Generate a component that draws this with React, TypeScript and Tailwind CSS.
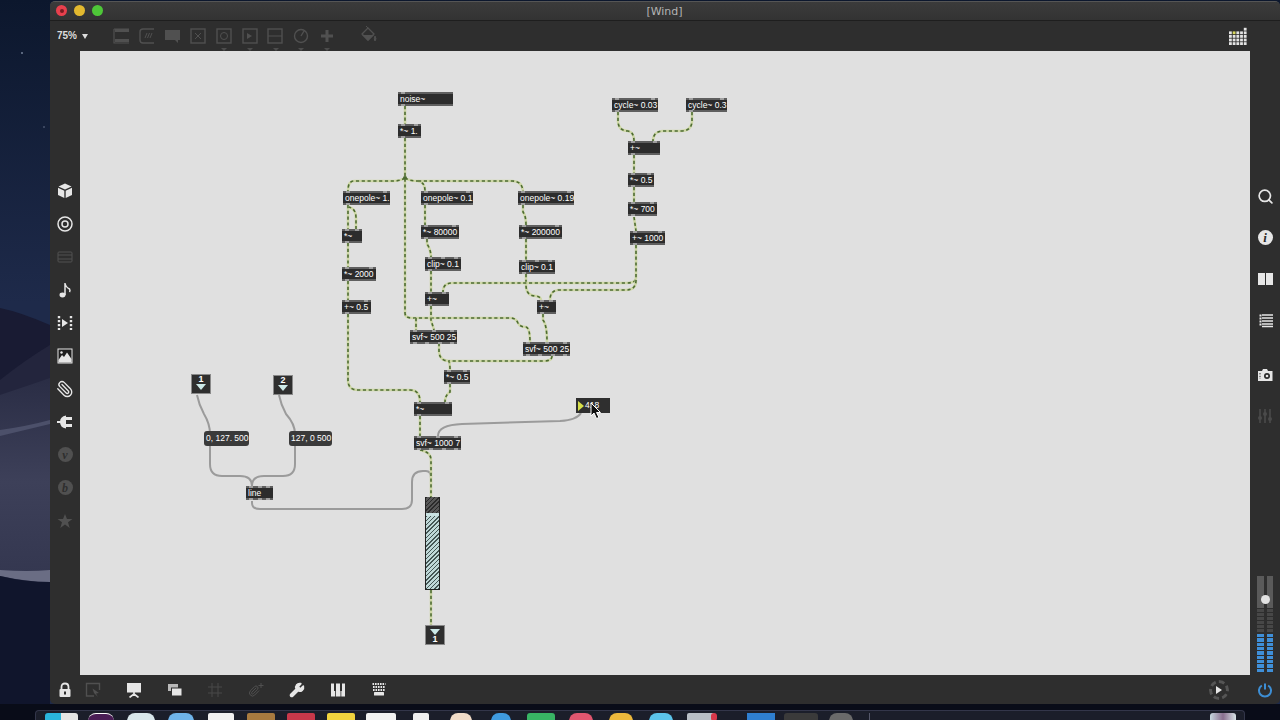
import { ReactNode } from "react";
import { Paperclip, Search, Wrench } from "lucide-react";

// patcher objects, in screen coordinates (canvas origin is subtracted below)
const CANVAS_X = 80;
const CANVAS_Y = 51;

interface Obj {
  t: string;
  x: number;
  y: number;
  w: number;
  ins?: number;
  outs?: number;
}

const objects: Obj[] = [
  { t: "noise~", x: 398, y: 92, w: 55, ins: 1, outs: 1 },
  { t: "*~ 1.", x: 398, y: 124, w: 23, ins: 2, outs: 1 },
  { t: "cycle~ 0.03", x: 612, y: 98, w: 46, ins: 2, outs: 1 },
  { t: "cycle~ 0.3", x: 686, y: 98, w: 41, ins: 2, outs: 1 },
  { t: "+~", x: 628, y: 141, w: 32, ins: 2, outs: 1 },
  { t: "*~ 0.5", x: 628, y: 173, w: 26, ins: 2, outs: 1 },
  { t: "*~ 700", x: 628, y: 202, w: 29, ins: 2, outs: 1 },
  { t: "+~ 1000", x: 630, y: 231, w: 35, ins: 2, outs: 1 },
  { t: "onepole~ 1.", x: 343, y: 191, w: 47, ins: 2, outs: 1 },
  { t: "onepole~ 0.1", x: 421, y: 191, w: 52, ins: 2, outs: 1 },
  { t: "onepole~ 0.19", x: 518, y: 191, w: 56, ins: 2, outs: 1 },
  { t: "*~", x: 342, y: 229, w: 20, ins: 2, outs: 1 },
  { t: "*~ 80000", x: 421, y: 225, w: 38, ins: 2, outs: 1 },
  { t: "*~ 200000", x: 519, y: 225, w: 43, ins: 2, outs: 1 },
  { t: "*~ 2000", x: 342, y: 267, w: 34, ins: 2, outs: 1 },
  { t: "+~ 0.5", x: 342, y: 300, w: 29, ins: 2, outs: 1 },
  { t: "clip~ 0.1", x: 425, y: 257, w: 36, ins: 3, outs: 1 },
  { t: "clip~ 0.1", x: 519, y: 260, w: 36, ins: 3, outs: 1 },
  { t: "+~", x: 425, y: 292, w: 24, ins: 2, outs: 1 },
  { t: "+~", x: 537, y: 300, w: 19, ins: 2, outs: 1 },
  { t: "svf~ 500 25", x: 410, y: 330, w: 47, ins: 3, outs: 4 },
  { t: "svf~ 500 25", x: 523, y: 342, w: 47, ins: 3, outs: 4 },
  { t: "*~ 0.5", x: 444, y: 370, w: 26, ins: 2, outs: 1 },
  { t: "*~", x: 414, y: 402, w: 38, ins: 2, outs: 1 },
  { t: "svf~ 1000 7", x: 414, y: 436, w: 47, ins: 3, outs: 4 },
  { t: "line", x: 246, y: 486, w: 27, ins: 3, outs: 3 },
];

const signalCords = [
  "M405 106V124",
  "M405 138V313Q405 318 412 318H510Q516 318 518 323Q520 327 526 327Q530 328 530 342",
  "M405 178Q400 181 394 181H354Q348 181 348 191",
  "M405 178Q410 181 418 181Q425 182 425 191",
  "M418 181H512Q522 181 523 191",
  "M348 205V229",
  "M348 207Q356 208 356 218V229",
  "M348 243V267",
  "M348 281V300",
  "M348 314V380Q348 390 358 390H410Q420 390 420 402",
  "M425 205V225",
  "M427 239V244Q431 250 431 257",
  "M431 271V292",
  "M431 306V320L434 330",
  "M416 318V330",
  "M523 205V212Q526 216 526 225",
  "M526 239V260",
  "M526 274V285Q526 296 536 296Q541 297 541 300",
  "M543 314V320Q547 325 547 342",
  "M636 245V278Q636 283 626 283H452Q443 283 443 292",
  "M636 280Q636 290 626 290H558Q550 291 550 300",
  "M439 343V352Q440 361 449 361Q450 364 450 370",
  "M552 356Q552 361 544 361H449",
  "M450 384V392Q445 395 445 402",
  "M420 416V436",
  "M420 450Q431 452 431 460V497",
  "M431 590V625",
  "M618 112V122Q619 131 628 131Q634 132 634 141",
  "M692 112V122Q691 131 681 131H662Q653 132 653 141",
  "M634 155V173",
  "M634 187V202",
  "M634 217L636 231",
];

const controlCords = [
  "M197 395Q199 405 204 414Q210 424 210 434V464Q210 476 222 476H240Q252 476 252 486",
  "M279 395Q281 405 286 414Q295 424 295 434V464Q295 476 283 476H264Q252 476 252 486",
  "M252 501V503Q252 509 260 509H402Q412 509 412 500V482Q412 471 423 471H426Q431 471 431 478",
  "M581 413Q577 420 560 421L462 424Q438 425 438 436",
];

function Cords() {
  return (
    <svg className="absolute inset-0 pointer-events-none" width="1170" height="624" viewBox="80 51 1170 624" fill="none">
      {controlCords.map((d, i) => (
        <path key={i} d={d} stroke="#9b9b9b" strokeWidth="2" />
      ))}
      {signalCords.map((d, i) => (
        <g key={i}>
          <path d={d} stroke="#cfd8a8" strokeWidth="2.6" />
          <path d={d} stroke="#4d6b33" strokeWidth="1.6" strokeDasharray="3.2 2.6" />
        </g>
      ))}
      <circle cx="405" cy="178" r="2" fill="#4d6b33" />
    </svg>
  );
}

function Nubs({ n }: { n: number }) {
  return (
    <div className="h-[2px] bg-[#5f5f5f] flex justify-between px-[3px]">
      {Array.from({ length: n }).map((_, i) => (
        <span key={i} className="w-[4px] h-[2px] bg-[#9f9f9f]" />
      ))}
    </div>
  );
}

function PatchObject({ o }: { o: Obj }) {
  return (
    <div
      className="absolute h-[14px] flex flex-col bg-[#2c2c2c]"
      style={{ left: o.x - CANVAS_X, top: o.y - CANVAS_Y, width: o.w }}
    >
      <Nubs n={o.ins ?? 1} />
      <div className="flex-1 flex items-center pl-[2px] text-[8.5px] leading-none text-white whitespace-nowrap">
        {o.t}
      </div>
      <Nubs n={o.outs ?? 1} />
    </div>
  );
}

function Message({ t, x, w }: { t: string; x: number; w: number }) {
  return (
    <div
      className="absolute top-[380px] h-[15px] rounded-[3px] bg-[#3a3a3a] flex items-center pl-[2px] text-[8.5px] leading-none text-white whitespace-nowrap"
      style={{ left: x - CANVAS_X, width: w }}
    >
      {t}
    </div>
  );
}

function Port({ n, x, y, outlet }: { n: string; x: number; y: number; outlet?: boolean }) {
  return (
    <div
      className={`absolute w-[20px] h-[20px] bg-[#2f2f2f] border border-[#8a8a8a] flex items-center text-[9px] leading-none font-bold text-white ${outlet ? "flex-col-reverse" : "flex-col"}`}
      style={{ left: x - CANVAS_X, top: y - CANVAS_Y }}
    >
      <span className="h-[9px] flex items-center">{n}</span>
      <span className={`w-0 h-0 border-x-[5px] border-x-transparent ${outlet ? "border-t-[6px] border-t-[#cdeae8] mt-[2px]" : "border-t-[6px] border-t-[#cdeae8]"}`} />
    </div>
  );
}

function GainSlider() {
  return (
    <div className="absolute left-[345px] top-[446px] w-[15px] h-[93px] flex flex-col border-x border-b border-[#222]">
      <div className="h-[16px] bg-[repeating-linear-gradient(135deg,#2b2b2b_0,#2b2b2b_1px,#585858_1px,#585858_3px)]" />
      <div className="h-[3px] bg-[#c9e2e2]" />
      <div className="flex-1 bg-[repeating-linear-gradient(135deg,#445554_0,#445554_1px,#bfd8d8_1px,#bfd8d8_3px)]" />
    </div>
  );
}

function NumberBox() {
  return (
    <div className="absolute left-[496px] top-[347px] w-[34px] h-[15px] bg-[#2f2f2f] flex items-center pl-[2px] gap-[1px] text-[8.5px] leading-none text-white">
      <span className="w-0 h-0 border-y-[5px] border-y-transparent border-l-[6px] border-l-[#d6df4a]" />
      418
    </div>
  );
}

function Cursor() {
  return (
    <svg className="absolute left-[509px] top-[351px] pointer-events-none" width="13" height="18" viewBox="0 0 13 18">
      <path d="M2 1V14L5 11L7.5 16.5L10 15.5L7.5 10.5H11.5Z" fill="#111" stroke="#fff" strokeWidth="1" />
    </svg>
  );
}

function Ico({ children, w = 20, h = 20, className = "" }: { children: ReactNode; w?: number; h?: number; className?: string }) {
  return (
    <svg width={w} height={h} viewBox={`0 0 ${w} ${h}`} fill="none" className={className}>
      {children}
    </svg>
  );
}

const DIM = "#505050";
const LT = "#e6e6e6";

const toolIcons: ReactNode[] = [
  <Ico key="a">
    <path d="M3 3H18M3 3V17H18M3 3H4" stroke={DIM} strokeWidth="1.2" />
    <rect x="4" y="3" width="14" height="3" fill={DIM} />
    <rect x="4" y="13" width="14" height="3" fill={DIM} />
  </Ico>,
  <Ico key="b">
    <path d="M17 3H6Q3 3 3 6V14Q3 17 6 17H17" stroke={DIM} strokeWidth="1.4" />
    <path d="M8 12L10 7M10.5 12L12.5 7M13 12L15 7" stroke={DIM} />
  </Ico>,
  <Ico key="c">
    <path d="M3 4H18V14H16V17L13 14H3Z" fill={DIM} />
  </Ico>,
  <Ico key="d">
    <rect x="3" y="3" width="14" height="14" stroke={DIM} strokeWidth="1.4" />
    <path d="M7 7L13 13M13 7L7 13" stroke={DIM} />
  </Ico>,
  <Ico key="e">
    <rect x="3" y="3" width="14" height="14" stroke={DIM} strokeWidth="1.4" />
    <circle cx="10" cy="10" r="3.5" stroke={DIM} />
  </Ico>,
  <Ico key="f">
    <rect x="3" y="3" width="14" height="14" stroke={DIM} strokeWidth="1.4" />
    <path d="M7 7V13L12 10Z" fill={DIM} />
  </Ico>,
  <Ico key="g">
    <rect x="3" y="3" width="14" height="14" stroke={DIM} strokeWidth="1.4" />
    <path d="M3 10H17" stroke={DIM} />
  </Ico>,
  <Ico key="h">
    <circle cx="10" cy="10" r="6.5" stroke={DIM} strokeWidth="1.4" />
    <path d="M10 10L13 5" stroke={DIM} strokeWidth="1.4" />
  </Ico>,
  <Ico key="i">
    <path d="M10 4V16M4 10H16" stroke={DIM} strokeWidth="3" />
  </Ico>,
];

const sideIcons: ReactNode[] = [
  <Ico key="box">
    <path d="M10 2.5L16.5 5.5L10 8.5L3.5 5.5Z" fill={LT} />
    <path d="M3 6.8L9.3 9.8V17L3 14Z" fill={LT} />
    <path d="M17 6.8L10.7 9.8V17L17 14Z" fill={LT} />
  </Ico>,
  <Ico key="tgt">
    <circle cx="10" cy="10" r="7" stroke={LT} strokeWidth="1.5" />
    <circle cx="10" cy="10" r="3" stroke={LT} strokeWidth="1.5" />
  </Ico>,
  <Ico key="bars">
    <rect x="3" y="5" width="14" height="10" rx="1" stroke={DIM} />
    <path d="M3 8H17M3 12H17" stroke={DIM} />
  </Ico>,
  <Ico key="note">
    <ellipse cx="7.5" cy="15" rx="3" ry="2.4" fill={LT} />
    <path d="M10 15V3Q10.5 7 14.5 9Q15.5 10.5 14.5 12" stroke={LT} strokeWidth="1.5" />
  </Ico>,
  <Ico key="film">
    <path d="M4 3V17M16 3V17" stroke={LT} strokeWidth="2.4" strokeDasharray="2.2 1.8" />
    <path d="M7 6V14L13 10Z" fill={LT} />
  </Ico>,
  <Ico key="img">
    <rect x="3" y="3" width="14" height="14" fill="#1f1f1f" stroke={LT} />
    <circle cx="6.5" cy="6.5" r="1.2" fill={LT} />
    <path d="M3.5 14L7 9L9 11L12 6.5L16.5 13V16.5H3.5Z" fill={LT} />
  </Ico>,
  <Paperclip key="clip" size={18} color={LT} strokeWidth={1.8} className="-scale-x-100" />,
  <Ico key="plug">
    <path d="M2 10H6" stroke={LT} strokeWidth="2" />
    <path d="M11 3.5V16.5Q5 15.5 5 10Q5 4.5 11 3.5Z" fill={LT} />
    <path d="M11 6.5H17M11 13.5H17" stroke={LT} strokeWidth="3" />
  </Ico>,
  <span key="v" className="w-[15px] h-[15px] rounded-full bg-[#505050] flex items-center justify-center font-['Liberation_Serif',serif] italic font-bold text-[12px] leading-none text-[#2e2e2e]">v</span>,
  <span key="b" className="w-[15px] h-[15px] rounded-full bg-[#505050] flex items-center justify-center font-['Liberation_Serif',serif] italic font-bold text-[12px] leading-none text-[#2e2e2e]">b</span>,
  <Ico key="star">
    <path d="M10 3L12 8H17.5L13 11.3L14.7 17L10 13.6L5.3 17L7 11.3L2.5 8H8Z" fill={DIM} />
  </Ico>,
];

function RightBar() {
  return (
    <aside className="w-[30px] flex flex-col items-center pt-[125px]">
      <div className="h-[41px] flex items-center">
        <Search size={17} color={LT} strokeWidth={2.4} />
      </div>
      <div className="h-[41px] flex items-center">
        <span className="w-[15px] h-[15px] rounded-full bg-[#e6e6e6] flex items-center justify-center font-['Liberation_Serif',serif] italic font-bold text-[13px] leading-none text-[#2a2a2a]">i</span>
      </div>
      <div className="h-[41px] flex items-center gap-[1px]">
        <span className="w-[7px] h-[12px] bg-[#e6e6e6]" />
        <span className="w-[7px] h-[12px] bg-[#e6e6e6]" />
      </div>
      <div className="h-[41px] flex items-center">
        <Ico w={16} h={16}>
          <path d="M3.5 2.5V14" stroke={LT} strokeWidth="2" strokeDasharray="2 1" />
          <path d="M5 3H16M5 6H16M5 9H16M5 12H16M5 14.5H16" stroke={LT} strokeWidth="1.6" />
        </Ico>
      </div>
      <div className="h-[55px] pt-[15px] flex items-center">
        <Ico w={16} h={16}>
          <path d="M1 4H5L6 2H10L11 4H15.5V14H1Z" fill={LT} />
          <circle cx="10" cy="9" r="3" fill="#2a2a2a" />
          <circle cx="10" cy="9" r="1.3" fill={LT} />
          <path d="M3 6V12" stroke="#2a2a2a" strokeWidth="1" strokeDasharray="1.4 1.4" />
        </Ico>
      </div>
      <div className="h-[41px] flex items-center">
        <Ico w={16} h={16}>
          <path d="M3 1V15M8 1V15M13 1V15" stroke="#4a4a4a" strokeWidth="1.6" />
          <circle cx="3" cy="10" r="2" fill="#4a4a4a" />
          <circle cx="8" cy="6" r="2" fill="#4a4a4a" />
          <circle cx="13" cy="11" r="2" fill="#4a4a4a" />
        </Ico>
      </div>
      <div className="flex-1" />
      <Meter />
    </aside>
  );
}

function MeterColumn() {
  return (
    <div className="w-[6.5px] h-[96px] flex flex-col">
      <div className="h-[32px] bg-[#5a5a5a]" />
      <div className="h-[25px] flex flex-col gap-[1px] pt-[1px]">
        {[0, 1, 2, 3, 4, 5].map((i) => (
          <span key={i} className="h-[3px] bg-[#474747]" />
        ))}
      </div>
      <div className="flex-1 flex flex-col gap-[1px] pt-[1px]">
        {[0, 1, 2, 3, 4, 5, 6, 7, 8].map((i) => (
          <span key={i} className="flex-1 bg-[#3f8fd8]" />
        ))}
      </div>
    </div>
  );
}

function Meter() {
  return (
    <div className="relative flex gap-[3px] mb-[3px]">
      <MeterColumn />
      <MeterColumn />
      <span className="absolute left-[3.5px] top-[19px] w-[9px] h-[9px] rounded-full bg-[#e2e2e2]" />
    </div>
  );
}

function BottomBar() {
  return (
    <footer className="h-[29px] flex items-center pl-[6px] pr-[6px]">
      <div className="w-[18px] flex justify-center">
        <Ico w={14} h={16}>
          <path d="M3.5 7V5Q3.5 1.5 7 1.5Q10.5 1.5 10.5 5V7" stroke={LT} strokeWidth="1.8" />
          <rect x="1.5" y="7" width="11" height="8" rx="1" fill={LT} />
          <rect x="6" y="9.5" width="2" height="3" fill="#2e2e2e" />
        </Ico>
      </div>
      <div className="w-[38px] flex justify-center">
        <Ico w={16} h={16}>
          <path d="M9 14H1.5V1.5H14.5V8" stroke={DIM} strokeWidth="1.4" />
          <path d="M7.5 6.5L14 11L11 11.5L13 15L9 11L7.5 6.5Z" fill={DIM} />
        </Ico>
      </div>
      <div className="w-[43px] flex justify-center">
        <Ico w={16} h={16}>
          <rect x="1" y="1" width="14" height="9.5" fill={LT} />
          <path d="M8 10V12M8 12L3.5 15.5M8 12L12.5 15.5" stroke={LT} strokeWidth="1.6" />
        </Ico>
      </div>
      <div className="w-[39px] flex justify-center">
        <Ico w={16} h={14}>
          <rect x="1" y="1" width="10" height="7" fill="#b9b9b9" />
          <rect x="4.5" y="5" width="10.5" height="8" fill={LT} stroke="#2e2e2e" />
        </Ico>
      </div>
      <div className="w-[41px] flex justify-center">
        <Ico w={16} h={16}>
          <path d="M5 1V15M11 1V15M1 5H15M1 11H15" stroke="#484848" />
        </Ico>
      </div>
      <div className="w-[41px] flex justify-center">
        <Ico w={16} h={16}>
          <Paperclip x={0} y={3} width={12} height={12} color={DIM} strokeWidth={2} />
          <path d="M13 1V6M10.5 3.5H15.5" stroke={DIM} />
        </Ico>
      </div>
      <div className="w-[41px] flex justify-center">
        <Wrench size={16} color={LT} fill={LT} />
      </div>
      <div className="w-[41px] flex justify-center">
        <Ico w={16} h={16}>
          <path d="M1 1.5H4V9H5V14.5H1ZM6 1.5H10V9H10.5V14.5H5.8V9H6ZM12 1.5H15V14.5H11.3V9H12Z" fill={LT} />
        </Ico>
      </div>
      <div className="w-[41px] flex justify-center">
        <Ico w={16} h={15}>
          <path d="M1.5 2H14.5M2 5H14M2 8H14" stroke={LT} strokeWidth="1.8" strokeDasharray="1.6 0.9" />
          <rect x="3" y="10" width="10" height="3.5" rx="0.5" fill={LT} />
        </Ico>
      </div>
      <div className="flex-1" />
      <div className="mr-[27px] w-[20px] h-[20px] rounded-full border-[3px] border-dashed border-[#555] flex items-center justify-center">
        <span className="w-0 h-0 border-y-[4px] border-y-transparent border-l-[6px] border-l-[#e6e6e6]" />
      </div>
      <div className="w-[18px] flex justify-center">
        <Ico w={16} h={16}>
          <path d="M8 1.5V7.5" stroke="#3d8ed4" strokeWidth="2" />
          <path d="M4.8 3.5A6 6 0 1 0 11.2 3.5" stroke="#3d8ed4" strokeWidth="2" />
        </Ico>
      </div>
    </footer>
  );
}

function GridIcon() {
  const cols = [0, 3.7, 7.4, 11.1, 14.8];
  const rows = [4.4, 8, 11.6, 15.2];
  return (
    <svg width="18" height="18" viewBox="0 0 18 18">
      <rect x="14.8" y="0.8" width="2.8" height="2.8" fill="#e4e4e4" />
      {rows.map((y) =>
        cols.map((x) => (
          <rect key={`${x}-${y}`} x={x} y={y} width="2.8" height="2.8" fill={x === 3.7 && y === 4.4 ? "#d8d860" : "#e4e4e4"} />
        ))
      )}
    </svg>
  );
}

function Wallpaper() {
  return (
    <svg className="absolute inset-0" width="1280" height="720" viewBox="0 0 1280 720">
      <defs>
        <linearGradient id="sky" x1="0" y1="0" x2="0" y2="1">
          <stop offset="0" stopColor="#0c172d" />
          <stop offset="0.42" stopColor="#1e2a4a" />
        </linearGradient>
        <linearGradient id="dune" x1="0" y1="0" x2="0" y2="1">
          <stop offset="0" stopColor="#2a2d45" />
          <stop offset="0.5" stopColor="#3d4059" />
          <stop offset="1" stopColor="#33364f" />
        </linearGradient>
      </defs>
      <rect width="1280" height="720" fill="url(#sky)" />
      <circle cx="22" cy="53" r="0.8" fill="#b9c6dc" />
      <circle cx="44" cy="127" r="0.7" fill="#7f8ba5" />
      <path d="M0 308Q20 312 50 325V420H0Z" fill="#191b33" />
      <path d="M0 380Q25 360 50 345V420H0Z" fill="#23253d" />
      <path d="M0 395Q30 385 50 378V585H0Z" fill="url(#dune)" />
      <path d="M0 430Q28 426 50 420V424Q25 430 0 436Z" fill="#4c506a" />
      <path d="M0 570Q28 572 50 570V582Q28 582 0 576Z" fill="#6a6d84" />
      <path d="M0 576Q25 582 50 582V720H0Z" fill="#10152c" />
      <rect y="704" width="1280" height="16" fill="#090c18" />
    </svg>
  );
}

const dockIcons = [
  { w: "w-[33px]", c: "bg-[linear-gradient(90deg,#2ab5dc_50%,#e4e4e4_50%)]", r: "rounded-t-[3px]" },
  { w: "w-[26px]", c: "bg-[#4a1d55] border-t border-white", r: "rounded-t-full" },
  { w: "w-[28px]", c: "bg-[#d8e6ea]", r: "rounded-t-full" },
  { w: "w-[26px]", c: "bg-[#6fb4ea]", r: "rounded-t-full" },
  { w: "w-[26px]", c: "bg-[#f0f0f0]", r: "rounded-t-[2px]" },
  { w: "w-[28px]", c: "bg-[#a87a3f]", r: "rounded-t-[2px]" },
  { w: "w-[28px]", c: "bg-[#c8384a]", r: "rounded-t-[2px]" },
  { w: "w-[28px]", c: "bg-[#f0d23e]", r: "rounded-t-[2px]" },
  { w: "w-[30px]", c: "bg-[#f2f2f2]", r: "rounded-t-[2px]" },
  { w: "w-[16px]", c: "bg-[#eeeeee]", r: "rounded-t-[2px]" },
  { w: "w-[22px]", c: "bg-[#f1dcc8]", r: "rounded-t-full" },
  { w: "w-[20px]", c: "bg-[#3f9be0]", r: "rounded-t-full" },
  { w: "w-[28px]", c: "bg-[#38b464]", r: "rounded-t-[3px]" },
  { w: "w-[24px]", c: "bg-[#e0566f]", r: "rounded-t-full" },
  { w: "w-[24px]", c: "bg-[#ecb83c]", r: "rounded-t-full" },
  { w: "w-[24px]", c: "bg-[#5cc4ea]", r: "rounded-t-full" },
  { w: "w-[28px]", c: "bg-[#b9bfc6]", r: "rounded-t-[2px]" },
];

function Dock() {
  return (
    <div className="absolute left-[35px] right-[35px] top-[710px] h-[10px] bg-[#1b1e2a] border-t border-x border-[#33364a] rounded-t-[4px] flex pl-[5px] pt-[2px]">
      {dockIcons.map((d, i) => (
        <div key={i} className="w-[40px] flex justify-center">
          <span className={`h-[8px] ${d.w} ${d.c} ${d.r}`} />
        </div>
      ))}
      <span className="w-[6px] h-[8px] -ml-[10px] rounded-full bg-[#d8384a]" />
      <div className="w-[40px] ml-[24px] flex justify-center">
        <span className="w-[28px] h-[8px] bg-[#2f7fd0]" />
      </div>
      <div className="w-[40px] flex justify-center">
        <span className="w-[34px] h-[8px] rounded-t-[3px] bg-[#3a3a3a]" />
      </div>
      <div className="w-[40px] flex justify-center">
        <span className="w-[24px] h-[8px] rounded-t-full bg-[#6a6a6a]" />
      </div>
      <span className="w-px h-[8px] ml-[8px] mr-[340px] bg-[#55586a]" />
      <span className="w-[26px] h-[8px] rounded-t-[3px] bg-[linear-gradient(90deg,#c8d8e0,#8a6f90,#d8e4e8)]" />
    </div>
  );
}

export default function App() {
  return (
    <div className="relative w-[1280px] h-[720px] overflow-hidden bg-[#0c172d] font-['Liberation_Sans',Arial,sans-serif]">
      <Wallpaper />
      <Dock />

      {/* patcher window */}
      <div className="absolute left-[50px] top-[1px] w-[1230px] h-[703px] flex flex-col bg-[#2e2e2e] rounded-[5px] border-t border-[#555] overflow-hidden">
        <header className="relative h-[19px] shrink-0 bg-[linear-gradient(#3b3b3b,#333333)] border-b border-[#1e1e1e] flex items-center justify-center">
          <div className="absolute left-[6px] top-[3px] flex gap-[7px]">
            <span className="w-[11px] h-[11px] rounded-full bg-[#e8404d] flex items-center justify-center">
              <span className="w-[4px] h-[4px] rounded-full bg-[#7a1a20]" />
            </span>
            <span className="w-[11px] h-[11px] rounded-full bg-[#e3b92f]" />
            <span className="w-[11px] h-[11px] rounded-full bg-[#4ec738]" />
          </div>
          <span className="ml-[-1px] text-[11px] leading-none text-[#b4b4b4] font-['DejaVu_Sans',sans-serif]">[Wind]</span>
        </header>

        <div className="h-[30px] shrink-0 flex items-center pl-[7px] pr-[33px]">
          <span className="text-[10px] font-bold text-[#dcdcdc] leading-none">75%</span>
          <span className="ml-[5px] w-0 h-0 border-x-[3px] border-x-transparent border-t-[5px] border-t-[#dcdcdc]" />
          <div className="ml-[20px] flex">
            {toolIcons.map((ic, i) => (
              <div key={i} className="relative w-[25.75px] flex justify-center">
                {ic}
                {i >= 4 && (
                  <span className="absolute left-[10px] -bottom-[5px] w-0 h-0 border-x-[3px] border-x-transparent border-t-[3px] border-t-[#4c4c4c]" />
                )}
              </div>
            ))}
          </div>
          <div className="ml-[15px] w-[26px] flex justify-center">
            <Ico>
              <path d="M10 2L16 8L10 14L4 8Z" stroke={DIM} strokeWidth="1.3" />
              <path d="M4 9H16L10 15Z" fill={DIM} />
              <path d="M10 2L8 0M17 10Q19 13 17 15Q15.5 13 17 10Z" fill={DIM} stroke={DIM} />
            </Ico>
          </div>
          <div className="flex-1" />
          <GridIcon />
        </div>

        <div className="flex-1 flex min-h-0">
          <aside className="w-[30px] flex flex-col items-center pt-[123px]">
            {sideIcons.map((ic, i) => (
              <div key={i} className="h-[33px] flex items-center justify-center">
                {ic}
              </div>
            ))}
          </aside>

          <main className="relative w-[1170px] h-[624px] bg-[#e0e0e0] overflow-hidden">
            <Cords />
            {objects.map((o, i) => (
              <PatchObject key={i} o={o} />
            ))}
            <Message t="0, 127. 500" x={204} w={45} />
            <Message t="127, 0 500" x={289} w={43} />
            <Port n="1" x={191} y={374} />
            <Port n="2" x={273} y={375} />
            <Port n="1" x={425} y={625} outlet />
            <NumberBox />
            <GainSlider />
            <Cursor />
          </main>

          <RightBar />
        </div>

        <BottomBar />
      </div>
    </div>
  );
}
